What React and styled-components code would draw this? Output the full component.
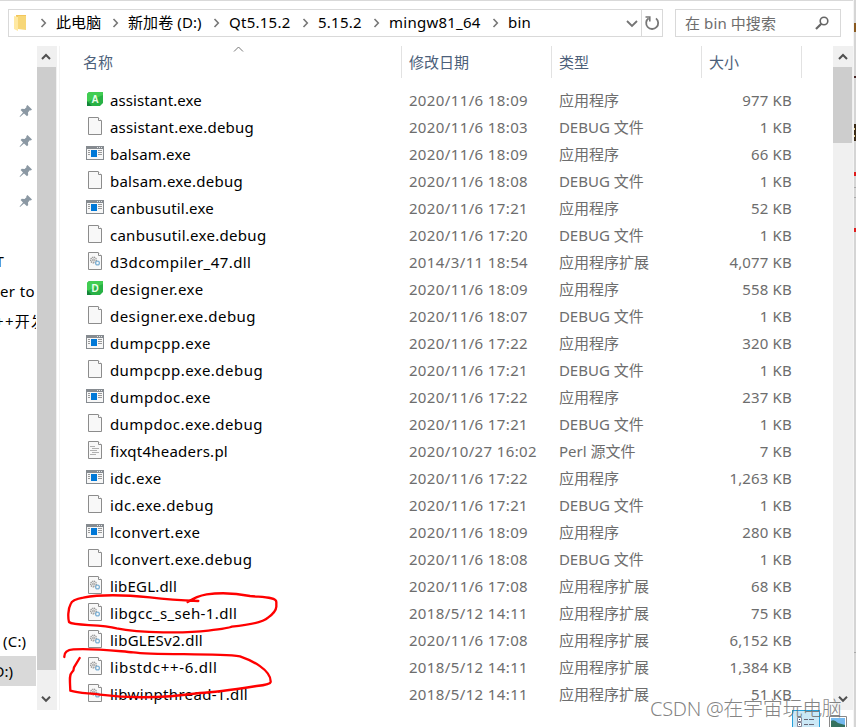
import React from "react";
import styled, { createGlobalStyle } from "styled-components";

// icon, name, date, type, size, name tracking
const files = [
  ["A", "assistant.exe", "2020/11/6 18:09", "应用程序", "977 KB", 0.1],
  ["file", "assistant.exe.debug", "2020/11/6 18:03", "DEBUG 文件", "1 KB", 0.21],
  ["exe", "balsam.exe", "2020/11/6 18:09", "应用程序", "66 KB", 0.15],
  ["file", "balsam.exe.debug", "2020/11/6 18:08", "DEBUG 文件", "1 KB", 0.26],
  ["exe", "canbusutil.exe", "2020/11/6 17:21", "应用程序", "52 KB", 0.2],
  ["file", "canbusutil.exe.debug", "2020/11/6 17:20", "DEBUG 文件", "1 KB", 0.29],
  ["dll", "d3dcompiler_47.dll", "2014/3/11 18:54", "应用程序扩展", "4,077 KB", 0.43],
  ["D", "designer.exe", "2020/11/6 18:09", "应用程序", "558 KB", 0.5],
  ["file", "designer.exe.debug", "2020/11/6 18:07", "DEBUG 文件", "1 KB", 0.5],
  ["exe", "dumpcpp.exe", "2020/11/6 17:22", "应用程序", "320 KB", 0.5],
  ["file", "dumpcpp.exe.debug", "2020/11/6 17:21", "DEBUG 文件", "1 KB", 0.48],
  ["exe", "dumpdoc.exe", "2020/11/6 17:22", "应用程序", "237 KB", 0.5],
  ["file", "dumpdoc.exe.debug", "2020/11/6 17:21", "DEBUG 文件", "1 KB", 0.48],
  ["text", "fixqt4headers.pl", "2020/10/27 16:02", "Perl 源文件", "7 KB", 0.24],
  ["exe", "idc.exe", "2020/11/6 17:22", "应用程序", "1,263 KB", 0.46],
  ["file", "idc.exe.debug", "2020/11/6 17:21", "DEBUG 文件", "1 KB", 0.46],
  ["exe", "lconvert.exe", "2020/11/6 18:09", "应用程序", "280 KB", 0.42],
  ["file", "lconvert.exe.debug", "2020/11/6 18:08", "DEBUG 文件", "1 KB", 0.42],
  ["dll", "libEGL.dll", "2020/11/6 17:08", "应用程序扩展", "68 KB", 0.2],
  ["dll", "libgcc_s_seh-1.dll", "2018/5/12 14:11", "应用程序扩展", "75 KB", 0.39],
  ["dll", "libGLESv2.dll", "2020/11/6 17:08", "应用程序扩展", "6,152 KB", 0.27],
  ["dll", "libstdc++-6.dll", "2018/5/12 14:11", "应用程序扩展", "1,384 KB", 0.68],
  ["dll", "libwinpthread-1.dll", "2018/5/12 14:11", "应用程序扩展", "51 KB", 0.33],
];

const crumbs = [
  ["此电脑", 46],
  ["新加卷 (D:)", 75],
  ["Qt5.15.2", 63],
  ["5.15.2", 45],
  ["mingw81_64", 93],
  ["bin", 24],
];

function FileIcon({ kind }) {
  if (kind === "A" || kind === "D") {
    return (
      <svg width="18" height="19" viewBox="0 -1 18 19">
        <path d="M3 2H17V13L14 16H1V4Z" fill="#28b145" />
        <path d="M3 2H17V5L1 12V4Z" fill="#41cd52" />
        <path d="M1 11L6 16H1Z" fill="#14853a" />
        <text x="9" y="12.8" textAnchor="middle" fontSize="10" fontWeight="700" fontFamily="Liberation Sans" fill="#e9ffe9">
          {kind}
        </text>
      </svg>
    );
  }
  if (kind === "exe") {
    return (
      <svg width="18" height="19" viewBox="0 -1 18 19" shapeRendering="crispEdges">
        <path d="M0 2H18V16H0Z" fill="#868b90" />
        <path d="M1 5H17V15H1Z" fill="#f7f7f7" />
        <path d="M11 3h1v1h-1zM13 3h1v1h-1zM15 3h1v1h-1z" fill="#e4e6e8" />
        <path d="M5 6H11V13H5Z" fill="#0078d7" />
        <path d="M2 6h2v1H2zM2 8h2v1H2zM2 10h2v1H2zM12 6h4v1h-4zM12 8h4v1h-4zM12 10h4v1h-4z" fill="#999" />
      </svg>
    );
  }
  return (
    <svg width="18" height="20" viewBox="0 0 18 20">
      <path d="M2.5 1.5H12L15.5 5V18.5H2.5Z" fill="#f8f8f8" stroke="#8c8c8c" />
      <path d="M12.5 1.5V4.5H15.5" fill="#fff" stroke="#8c8c8c" />
      {kind === "text" && (
        <path d="M4 6.5h5M6 8.5h7M4 10.5h7M6 12.5h7M4 14.5h6" stroke="#b0b0b0" />
      )}
      {kind === "dll" && (
        <g fill="none">
          <circle cx="7.5" cy="9" r="2.8" stroke="#999" strokeWidth="1.5" strokeDasharray="1.3 .6" />
          <circle cx="7.5" cy="9" r="1" stroke="#888" strokeWidth=".8" />
          <circle cx="11.5" cy="12" r="1.9" stroke="#7eb1d5" strokeWidth="1.3" />
        </g>
      )}
    </svg>
  );
}

function Arrow({ up }) {
  return (
    <svg width="10" height="8" viewBox="0 0 10 8">
      <path d={up ? "M1 6L5 2L9 6" : "M1 1.8L5 5.8L9 1.8"} fill="none" stroke="#505050" strokeWidth="2" />
    </svg>
  );
}

function Pin() {
  return (
    <svg width="14" height="14" viewBox="0 0 14 14">
      <path d="M8.5 1L13 5.4L11.8 6.6L10.8 6.3L9 8.4L9.2 11L8 12.2L5 9.6L1 13L.6 12.5L4 8.6L1.6 6L2.8 4.8L5.6 5L7.6 3L7.2 2.2Z" fill="#8b98a3" />
    </svg>
  );
}

// Hand-drawn marks round the two runtime libraries
function Marks() {
  return (
    <MarkLayer width="300" height="157" viewBox="0 0 900 471">
      <path d="M595 93C540 91 490 87 450 82C390 76 310 71 250 83Q216 89 212 102C203 118 204 145 207 156C222 169 300 161 350 175C420 190 560 190 625 182Q690 174 695 170C760 164 790 156 804 143Q828 126 829 110V96C829 81 790 82 750 78C700 68 650 69 620 73Q590 78 563 96" />
      <path d="M193 261Q192 240 220 238C280 234 340 242 400 247C460 256 650 249 720 259C755 271 814 300 812 336Q811 344 770 348C700 359 650 367 600 369C480 386 380 384 300 374C260 369 235 370 211 362C210 335 207 315 215 308Q222 302 222 292L239 264" />
    </MarkLayer>
  );
}

export default function App() {
  return (
    <>
      <Global />
      <Page>
        <Explorer>
          <TopBar>
            <Address>
              <svg width="14" height="18" viewBox="0 0 14 18">
                <path d="M2 1H12V15H2Z" fill="#f2c65c" />
                <path d="M0 2L4 3V17L0 15Z" fill="#ffe9a2" />
                <path d="M4 2H12V16L4 15Z" fill="#f7d778" />
              </svg>
              {crumbs.map(([name, width]) => (
                <React.Fragment key={name}>
                  <Chevron width="7" height="10" viewBox="0 0 7 10">
                    <path d="M1.5 1L5.3 5L1.5 9" />
                  </Chevron>
                  <Crumb $w={width}>{name}</Crumb>
                </React.Fragment>
              ))}
              <Spacer />
              <svg width="12" height="9" viewBox="0 0 12 9">
                <path d="M1 2L6 7L11 2" fill="none" stroke="#747474" strokeWidth="1.8" />
              </svg>
              <Refresh>
                <svg width="16" height="16" viewBox="0 0 16 16">
                  <path d="M4.6 3.2A6 6 0 1 0 12 3.4" fill="none" stroke="#777" strokeWidth="1.8" />
                  <path d="M1.5 2H5.8V6.6" fill="none" stroke="#777" strokeWidth="1.6" />
                </svg>
              </Refresh>
            </Address>
            <Search>
              <span>在 bin 中搜索</span>
              <svg width="14" height="14" viewBox="0 0 14 14">
                <circle cx="9" cy="5" r="3.8" fill="none" stroke="#666" strokeWidth="1.6" />
                <path d="M6.3 7.8L1 13" stroke="#666" strokeWidth="2.2" />
              </svg>
            </Search>
          </TopBar>
          <Body>
            <Sidebar>
              {[0, 1, 2, 3].map((i) => (
                <SideRow key={i} $x={19}>
                  <Pin />
                </SideRow>
              ))}
              <SideRow />
              <SideRow $x={-4.6}>T</SideRow>
              <SideRow $x={0} $track={0.4}>er to</SideRow>
              <SideRow $x={-5} $track={1.3}>++开发</SideRow>
              <SideGap />
              <SideRow $x={3} $track={0.2}>(C:)</SideRow>
              <SideRow $x={-11} $active>(D:)</SideRow>
            </Sidebar>
            <Scrollbar>
              <Arrow up />
              <Thumb $h={603} />
              <Arrow />
            </Scrollbar>
            <Files>
              <Header>
                <HeadCell $w={342}>
                  名称
                  <SortMark width="12" height="6" viewBox="0 0 12 6">
                    <path d="M1 5.5L5.5 1L10 5.5" fill="none" stroke="#777" />
                  </SortMark>
                </HeadCell>
                <HeadCell $w={150}>修改日期</HeadCell>
                <HeadCell $w={150}>类型</HeadCell>
                <HeadCell $w={100}>大小</HeadCell>
              </Header>
              {files.map(([kind, name, date, type, size, track]) => (
                <Row key={name}>
                  <IconBox>
                    <FileIcon kind={kind} />
                  </IconBox>
                  <Name $track={track}>{name}</Name>
                  <Modified>{date}</Modified>
                  <Type>{type}</Type>
                  <Size>{size}</Size>
                </Row>
              ))}
            </Files>
            <Scrollbar>
              <Arrow up />
              <Thumb $h={76} />
              <Arrow />
            </Scrollbar>
          </Body>
          <StatusBar>
            <ViewButton $active>
              <svg width="18" height="16" viewBox="0 0 18 16">
                <path d="M.5 1.5h4v4h-4zM.5 6.5h4v4h-4zM.5 11.5h4v4h-4z" fill="#fff" stroke="#889" />
                <path d="M2 3h1v1H2zM2 8h1v1H2z" fill="#257" />
                <path d="M7 3.5h4M12 3.5h5M7 8.5h4M12 8.5h5M7 13.5h4M12 13.5h5" stroke="#667" />
              </svg>
            </ViewButton>
            <ViewButton>
              <svg width="18" height="16" viewBox="0 0 18 16">
                <path d="M.5 .5H17.5V15.5H.5Z" fill="#fff" stroke="#888" />
                <path d="M2 2H16V14H2Z" fill="#75b9ef" />
                <path d="M2 5Q5 3 9 7L16 9V14H2Z" fill="#35715f" />
              </svg>
            </ViewButton>
          </StatusBar>
        </Explorer>
        <Behind>
          <svg width="2" height="727" viewBox="1 0 2 727">
            <path d="M1 23h2v9h-2z" fill="#8a5a20" />
            <path d="M1 76h2v2h-2z" fill="#422" />
            <path d="M1 124h2v17h-2z" fill="#3a2b18" />
            <path d="M1 128h1v2h-1zM1 135h1v2h-1z" fill="#e8d69b" />
            <path d="M0 172h3v4h-3zM0 228h3v4h-3z" fill="#e01c1c" />
            <path d="M0 187h3v1h-3zM0 197h3v1h-3zM0 652h3v1h-3z" fill="#aaa" />
          </svg>
        </Behind>
        <Marks />
        <Watermark>CSDN @在宇宙玩电脑</Watermark>
      </Page>
    </>
  );
}

const Global = createGlobalStyle`
  * {
    box-sizing: border-box;
  }
  body {
    margin: 0;
    background: #fff;
    overflow: hidden;
  }
  svg {
    display: block;
    flex-shrink: 0;
  }
`;

const Page = styled.div`
  position: relative;
  display: flex;
  width: 856px;
  height: 727px;
  overflow: hidden;
  font: 15px/27px "Noto Sans", "Noto Sans CJK SC", sans-serif;
  color: #000;
  white-space: nowrap;
`;

const Explorer = styled.div`
  display: flex;
  flex-direction: column;
  width: 853px;
  border-top: 1px solid #d9d9d9;
`;

const Behind = styled.div`
  width: 3px;
  background: #d5d5d5;
  border-left: 1px solid #f5f5f5;
`;

const TopBar = styled.div`
  display: flex;
  gap: 12px;
  height: 45px;
  padding: 8px 12px 9px 8px;
`;

const Address = styled.div`
  display: flex;
  align-items: center;
  width: 655px;
  height: 28px;
  padding-left: 5px;
  border: 1px solid #d9d9d9;
`;

const Chevron = styled.svg`
  margin: 0 9px 0 10px;
  fill: none;
  stroke: #777;
  stroke-width: 1.6;

  svg + & {
    margin: 0 9px 0 12px;
  }
`;

const Crumb = styled.span`
  width: ${(p) => p.$w}px;
  padding-bottom: 2px;
  letter-spacing: 0.25px;

  &:nth-of-type(-n + 2) {
    letter-spacing: 0.1px;
  }
`;

const Spacer = styled.div`
  flex: 1;
`;

const Refresh = styled.div`
  display: flex;
  align-items: center;
  justify-content: center;
  width: 21px;
  height: 26px;
  margin-left: 3px;
  border-left: 1px solid #d9d9d9;
`;

const Search = styled.div`
  display: flex;
  align-items: center;
  justify-content: space-between;
  width: 166px;
  height: 28px;
  padding: 0 11px 0 9px;
  border: 1px solid #d9d9d9;
  color: #6d6d6d;
  letter-spacing: 0.1px;
`;

const Body = styled.div`
  display: flex;
  height: 664px;
`;

const Sidebar = styled.div`
  width: 37px;
  padding: 50px 1px 0 0;
  overflow: hidden;
`;

const SideRow = styled.div`
  display: flex;
  align-items: center;
  height: 30px;
  padding-left: ${(p) => Math.max(p.$x || 0, 0)}px;
  text-indent: ${(p) => Math.min(p.$x || 0, 0)}px;
  letter-spacing: ${(p) => p.$track || 0}px;
  overflow: hidden;
  background: ${(p) => (p.$active ? "#d9d9d9" : "transparent")};
`;

const SideGap = styled.div`
  height: 290px;
`;

const Scrollbar = styled.div`
  display: flex;
  flex-direction: column;
  align-items: center;
  width: 20px;
  padding: 7px 1px 7px 0;
  background: #f0f0f0;

  svg:last-child {
    margin-top: auto;
  }
`;

const Thumb = styled.div`
  width: 19px;
  height: ${(p) => p.$h}px;
  margin-top: 6px;
  background: #cdcdcd;
`;

const Files = styled.div`
  width: 776px;
  margin-left: 2px;
  border-left: 1px solid #f3f3f3;
`;

const Header = styled.div`
  display: flex;
  height: 32px;
  margin-bottom: 9px;
`;

const HeadCell = styled.div`
  position: relative;
  width: ${(p) => p.$w}px;
  padding-left: 7px;
  border-right: 1px solid #e2e2e2;
  line-height: 32px;
  color: #4c607a;

  &:first-child {
    padding-left: 23px;
  }
`;

const SortMark = styled.svg`
  position: absolute;
  top: 0;
  left: 173px;
`;

const Row = styled.div`
  display: flex;
  height: 27px;
  color: #6d6d6d;
`;

const IconBox = styled.div`
  width: 24px;
  margin: 2px 0 0 26px;
`;

const Name = styled.div`
  width: 299px;
  color: #000;
  letter-spacing: ${(p) => p.$track}px;
`;

const Modified = styled.div`
  width: 150px;
  letter-spacing: 0.38px;
`;

const Type = styled.div`
  width: 140px;
`;

const Size = styled.div`
  width: 93px;
  text-align: right;
  letter-spacing: 0.15px;
`;

const StatusBar = styled.div`
  display: flex;
  gap: 4px;
  height: 17px;
  padding-left: 792px;
  overflow: hidden;
`;

const ViewButton = styled.div`
  display: flex;
  width: 28px;
  height: 26px;
  padding: 5px 4px;
  border: 1px solid ${(p) => (p.$active ? "#26a0da" : "transparent")};
  background: ${(p) => (p.$active ? "#cbe8f6" : "transparent")};
`;

const MarkLayer = styled.svg`
  position: absolute;
  left: 0;
  top: 570px;
  fill: none;
  stroke: #f00;
  stroke-width: 7;
  stroke-linecap: round;
  stroke-linejoin: round;
`;

const Watermark = styled.div`
  position: absolute;
  left: 650px;
  top: 695px;
  font-size: 20px;
  font-weight: 300;
  letter-spacing: -0.3px;
  color: rgba(100, 100, 100, 0.8);
`;
